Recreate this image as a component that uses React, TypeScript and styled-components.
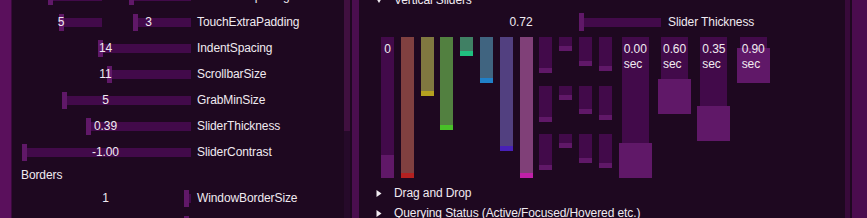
import React from "react";
import styled, { createGlobalStyle } from "styled-components";

const C = {
  bg: "#1e0820",
  frame: "#420a4a",
  grab: "#601868",
  text: "#f0eaf0",
};

const Global = createGlobalStyle`
  html, body { margin: 0; padding: 0; background: ${C.bg}; overflow: hidden; }
  body {
    font-family: "Liberation Sans", Arial, sans-serif;
    font-size: 12px;
    letter-spacing: -0.1px;
    color: ${C.text};
  }
`;

const Screen = styled.div`
  display: flex;
  width: 867px;
  height: 218px;
  overflow: hidden;
  background: ${C.bg};
`;

const EdgeBar = styled.div<{ $w: number; $c: string }>`
  flex: 0 0 ${(p) => p.$w}px;
  background: ${(p) => p.$c};
`;

const LeftPanel = styled.div`
  flex: 0 0 332px;
  overflow: hidden;
  padding-left: 8px;
  box-sizing: border-box;
`;

const RowList = styled.div`
  display: flex;
  flex-direction: column;
  margin-top: -17px;
`;

const Row = styled.div<{ $h?: number }>`
  display: flex;
  align-items: center;
  flex: 0 0 ${(p) => p.$h ?? 26}px;
`;

const SliderGroup = styled.div`
  display: flex;
  gap: 4px;
  flex: 0 0 171px;
  height: 17px;
`;

const HFrame = styled.div<{ $w: number }>`
  position: relative;
  display: flex;
  align-items: center;
  flex: 0 0 ${(p) => p.$w}px;
  height: 100%;
`;

const HSpacer = styled.div`
  flex: 0 0 auto;
`;

const HGrab = styled.div`
  flex: 0 0 5px;
  align-self: stretch;
  background: ${C.grab};
`;

const HFill = styled.div`
  flex: 1 1 auto;
  height: 9px;
  background: ${C.frame};
`;

const FrameValue = styled.span`
  position: absolute;
  inset: 0;
  display: flex;
  align-items: center;
  justify-content: center;
  white-space: nowrap;
`;

const Label = styled.span<{ $gap?: number }>`
  margin-left: ${(p) => p.$gap ?? 6}px;
  white-space: nowrap;
`;

const SectionText = styled.span`
  padding-left: 1px;
`;

const Scrollbar = styled.div`
  flex: 0 0 6px;
  display: flex;
  flex-direction: column;
  background: #260a2a;
`;

const ScrollGrab = styled.div`
  flex: 0 0 131px;
  background: #40103f;
`;

const RightPanel = styled.div`
  flex: 0 0 486px;
  display: flex;
  flex-direction: column;
  padding-left: 17px;
  box-sizing: border-box;
  overflow: hidden;
`;

const TreeRow = styled.div<{ $mt?: number }>`
  display: flex;
  align-items: center;
  flex: 0 0 20px;
  margin-top: ${(p) => p.$mt ?? 0}px;
  white-space: nowrap;
`;

const TreeText = styled.span`
  margin-left: 12px;
`;

const Indented = styled.div<{ $mt: number; $h: number }>`
  display: flex;
  align-items: center;
  margin-top: ${(p) => p.$mt}px;
  margin-left: 5px;
  flex: 0 0 ${(p) => p.$h}px;
`;

const VRow = styled.div`
  display: flex;
  height: 141px;
  gap: 6.8px;
  align-items: stretch;
`;

const VCol = styled.div<{ $w: number }>`
  position: relative;
  display: flex;
  flex-direction: column;
  flex: 0 0 ${(p) => p.$w}px;
`;

const VFill = styled.div<{ $c: string }>`
  flex: 0 0 auto;
  background: ${(p) => p.$c};
`;

const VGrab = styled.div<{ $c: string; $h: number; $out?: number }>`
  flex: 0 0 ${(p) => p.$h}px;
  background: ${(p) => p.$c};
  margin: 0 ${(p) => -(p.$out ?? 0)}px;
`;

const VText = styled.div`
  position: absolute;
  top: 5px;
  left: 0;
  right: 0;
  display: flex;
  justify-content: center;
  line-height: 15px;
`;

const VTextBlock = styled.div`
  text-align: left;
  white-space: pre;
`;

const SmallColumn = styled.div`
  display: flex;
  flex-direction: column;
  gap: 4.5px;
  flex: 0 0 13px;
`;

const SmallCell = styled.div`
  display: flex;
  flex-direction: column;
  flex: 0 0 44px;
`;

const BigGroup = styled.div`
  display: flex;
  gap: 12.3px;
  margin-left: 3.2px;
`;

type HS = { w: number; pos: number; v: string };
type LeftRow =
  | { kind: "slider"; label: string; sliders: HS[] }
  | { kind: "text"; label: string };

const leftRows: LeftRow[] = [
  { kind: "slider", label: "ItemInnerSpacing", sliders: [{ w: 82, pos: 28, v: "" }, { w: 85, pos: 23, v: "" }] },
  { kind: "slider", label: "TouchExtraPadding", sliders: [{ w: 82, pos: 39, v: "5" }, { w: 85, pos: 27, v: "3" }] },
  { kind: "slider", label: "IndentSpacing", sliders: [{ w: 171, pos: 78, v: "14" }] },
  { kind: "slider", label: "ScrollbarSize", sliders: [{ w: 171, pos: 87, v: "11" }] },
  { kind: "slider", label: "GrabMinSize", sliders: [{ w: 171, pos: 42, v: "5" }] },
  { kind: "slider", label: "SliderThickness", sliders: [{ w: 171, pos: 66, v: "0.39" }] },
  { kind: "slider", label: "SliderContrast", sliders: [{ w: 171, pos: 2, v: "-1.00" }] },
  { kind: "text", label: "Borders" },
  { kind: "slider", label: "WindowBorderSize", sliders: [{ w: 171, pos: 164, v: "1" }] },
  { kind: "slider", label: "", sliders: [{ w: 171, pos: 164, v: "" }] },
];

const colored = [
  { f: "#804040", g: "#b42020", v: 0.0 },
  { f: "#807840", g: "#b4a020", v: 0.6 },
  { f: "#528040", g: "#48c028", v: 0.35 },
  { f: "#408064", g: "#20c080", v: 0.9 },
  { f: "#406480", g: "#2080c8", v: 0.7 },
  { f: "#524080", g: "#4820b8", v: 0.2 },
  { f: "#804078", g: "#c020a8", v: 0.0 },
];

const smallOffsets = [31, 9, 23.5, 29];
const big = [
  { v: 0.0, t: "0.00" },
  { v: 0.6, t: "0.60" },
  { v: 0.35, t: "0.35" },
  { v: 0.9, t: "0.90" },
];

function HSlider({ s }: { s: HS }) {
  return (
    <HFrame $w={s.w}>
      <HSpacer style={{ width: s.pos }} />
      <HGrab />
      <HFill />
      {s.v && <FrameValue>{s.v}</FrameValue>}
    </HFrame>
  );
}

function Arrow({ down }: { down?: boolean }) {
  return (
    <svg width="6" height="7" viewBox="0 0 6 7" style={{ flex: "0 0 6px" }}>
      {down ? <polygon points="0,1 6,1 3,6" fill={C.text} /> : <polygon points="0.5,0 5.5,3.5 0.5,7" fill={C.text} />}
    </svg>
  );
}

export default function App() {
  return (
    <>
      <Global />
      <Screen>
        <EdgeBar $w={11} $c="#5a105c" />
        <EdgeBar $w={1} $c="#3a0a3c" />
        <LeftPanel>
          <RowList>
            {leftRows.map((r, i) =>
              r.kind === "text" ? (
                <Row key={i} $h={20}>
                  <SectionText>{r.label}</SectionText>
                </Row>
              ) : (
                <Row key={i}>
                  <SliderGroup>
                    {r.sliders.map((s, j) => (
                      <HSlider key={j} s={s} />
                    ))}
                  </SliderGroup>
                  {r.label && <Label>{r.label}</Label>}
                </Row>
              )
            )}
          </RowList>
        </LeftPanel>
        <Scrollbar>
          <ScrollGrab />
        </Scrollbar>
        <EdgeBar $w={2} $c={C.bg} />
        <EdgeBar $w={7} $c="#4a0e4e" />
        <RightPanel>
          <TreeRow $mt={-10}>
            <Arrow down />
            <TreeText>Vertical Sliders</TreeText>
          </TreeRow>
          <Indented $mt={3} $h={18}>
            <HFrame $w={280}>
              <HSpacer style={{ width: 0.72 * 275 }} />
              <HGrab />
              <HFill />
              <FrameValue>0.72</FrameValue>
            </HFrame>
            <Label $gap={7}>Slider Thickness</Label>
          </Indented>
          <Indented $mt={6} $h={141}>
            <VRow>
              <VCol $w={13}>
                <VFill $c={C.frame} style={{ height: 118 }} />
                <VGrab $c={C.grab} $h={23} />
                <VText>0</VText>
              </VCol>
              {colored.map((c, i) => (
                <VCol key={i} $w={13}>
                  <VFill $c={c.f} style={{ height: Math.round((1 - c.v) * 136) }} />
                  <VGrab $c={c.g} $h={5} />
                </VCol>
              ))}
              {smallOffsets.map((o, i) => (
                <SmallColumn key={i}>
                  {[0, 1, 2].map((r) => (
                    <SmallCell key={r}>
                      <VFill $c={C.frame} style={{ height: o }} />
                      <VGrab $c={C.grab} $h={5} />
                    </SmallCell>
                  ))}
                </SmallColumn>
              ))}
              <BigGroup>
                {big.map((b, i) => (
                  <VCol key={i} $w={27}>
                    <VFill $c={C.frame} style={{ height: (1 - b.v) * 106 }} />
                    <VGrab $c={C.grab} $h={35} $out={3} />
                    <VText>
                      <VTextBlock>{b.t + "\nsec"}</VTextBlock>
                    </VText>
                  </VCol>
                ))}
              </BigGroup>
            </VRow>
          </Indented>
          <TreeRow $mt={5}>
            <Arrow />
            <TreeText>Drag and Drop</TreeText>
          </TreeRow>
          <TreeRow>
            <Arrow />
            <TreeText>Querying Status (Active/Focused/Hovered etc.)</TreeText>
          </TreeRow>
        </RightPanel>
        <EdgeBar $w={5} $c="#380a3a" />
        <EdgeBar $w={2} $c={C.bg} />
        <EdgeBar $w={15} $c="#4a0c4e" />
      </Screen>
    </>
  );
}
